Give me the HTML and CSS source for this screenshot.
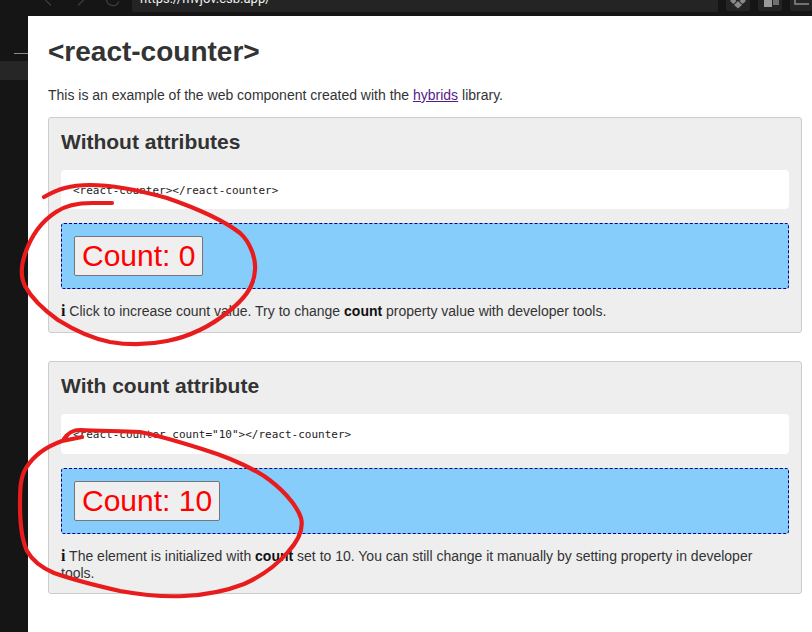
FILE: index.html
```html
<!DOCTYPE html>
<html lang="en">
<head>
<meta charset="utf-8">
<title>react-counter</title>
<link rel="stylesheet" href="styles.css">
</head>
<body>
<div class="app">
  <header class="topbar">
    <div class="nav">
      <svg class="navicons" width="132" height="16" viewBox="0 0 132 16" fill="none" stroke="#3c3c3c" stroke-width="1.300"><path d="M52 -6 45.500 0 51 5.500"/><path d="M78 5.500 83.500 0 78 -6"/><path d="M106.500 -1a6.500 6.500 0 0 0 12.500 2.500"/></svg>
    </div>
    <div class="url"><span class="urltext">https://mvjov.csb.app/</span></div>
    <div class="tools">
      <div class="tool"><svg width="24" height="11" viewBox="0 0 24 11"><path d="M12 1 16 5 12 8.500 8 5ZM7 -2 10.500 1 7.500 4 4 1ZM17 -2 20 1 16.500 4 13.500 1Z" fill="#8a8a8a"/></svg></div>
      <div class="tool"><svg width="24" height="11" viewBox="0 0 24 11"><path d="M6 0h8v7H6z" fill="#9a9a9a"/><path d="M15 0h6v5h-6z" fill="#707070"/></svg></div>
      <div class="tool tool-last"><svg width="22" height="11" viewBox="0 0 22 11" fill="none" stroke="#8a8a8a" stroke-width="1.500"><path d="M5 0v4h14"/></svg></div>
    </div>
  </header>
  <div class="body">
    <aside class="sidebar"><div class="marker"></div><div class="selected"></div></aside>
    <main class="page">
      <h1 class="title">&lt;react-counter&gt;</h1>
      <p class="intro">This is an example of the web component created with the <a class="link" href="#">hybrids</a> library.</p>
      <section class="card">
        <h2 class="card-title">Without attributes</h2>
        <pre class="code">&lt;react-counter&gt;&lt;/react-counter&gt;</pre>
        <div class="host"><button class="count">Count: 0</button></div>
        <p class="note"><span class="info">i</span> Click to increase count value. Try to change <b>count</b> property value with developer tools.</p>
      </section>
      <section class="card">
        <h2 class="card-title">With count attribute</h2>
        <pre class="code">&lt;react-counter count="10"&gt;&lt;/react-counter&gt;</pre>
        <div class="host"><button class="count">Count: 10</button></div>
        <p class="note"><span class="info">i</span> The element is initialized with <b>count</b> set to 10. You can still change it manually by setting property in developer tools.</p>
      </section>
    </main>
  </div>
  <svg class="ink" width="812" height="632" viewBox="0 0 812 632" fill="none" stroke="#e81c1c" stroke-width="4.200" stroke-linecap="round" stroke-linejoin="round">
    <path d="M44 197C58 189 70 185 90 185C112 185 138 190 167 198C190 206 222 219 240 233C250 242 256 258 255 270C254 288 243 300 228 312C212 325 192 336 167 341C148 345 128 345 110 342C90 338 74 330 58 320C44 310 32 299 25 286C20 276 21 266 25 254C31 236 42 221 56 212C66 205 78 203 92 203L112 203"/>
    <path d="M64 439C68 433 72 430 80 430C100 431 120 431 140 432C160 436 180 442 202 449C225 456 248 466 264 476C280 487 296 503 301 518C304 530 298 541 288 552C276 566 262 576 244 584C226 591 206 595 184 596C164 597 142 595 120 591C98 586 74 580 54 573C40 567 32 560 27 551C21 538 20 520 20 505C20 490 20 478 26 468C34 455 48 446 62 441L82 437"/>
  </svg>
</div>
</body>
</html>
```
FILE: styles.css
```css
* { box-sizing: border-box; }
html, body { margin: 0; height: 100%; overflow: hidden; }
body { background: #151515; font-family: "Liberation Sans", Arial, sans-serif; }
.app { position: relative; width: 812px; height: 632px; display: flex; flex-direction: column; overflow: hidden; }

.topbar { flex: 0 0 16px; height: 16px; display: flex; background: #151515; overflow: hidden; }
.nav { width: 132px; flex: none; }
.navicons { display: block; }
.url { width: 586px; height: 12px; flex: none; background: #242424; border-radius: 0 0 2px 2px; color: #f0f0f0; font-family: Roboto, sans-serif; font-size: 13px; line-height: 14px; padding-left: 8px; overflow: hidden; }
.urltext { display: block; margin-top: -8px; }
.tools { display: flex; gap: 8px; margin-left: 8px; }
.tool { width: 24px; height: 11px; background: #242424; border-radius: 0 0 2px 2px; }
.tool svg { display: block; }
.tool-last { width: 22px; }

.body { flex: 1; display: flex; min-height: 0; }
.sidebar { position: relative; width: 28px; flex: none; background: #151515; }
.marker { position: absolute; left: 14px; top: 37px; width: 14px; height: 1px; background: #8a8a8a; }
.selected { position: absolute; left: 0; top: 45px; width: 28px; height: 19px; background: #262626; }

.page { flex: 1; background: #fff; padding: 20px 10px 0 20px; color: #333; font-size: 14px; line-height: 16px; min-width: 0; }
.title { margin: 0; font-size: 28px; line-height: 32px; font-weight: 700; color: #333; }
.intro { margin: 19px 0 13.6px; color: #333; }
.link { color: #551a8b; text-decoration: underline; }

.card { background: #eee; border: 1px solid #ccc; border-radius: 3px; padding: 12px 12px 11.8px; margin-bottom: 28px; }
.card-title { margin: 0 0 16px; font-size: 21px; line-height: 24px; font-weight: 700; color: #333; }
.code { margin: 0 0 14px; height: 39.6px; background: #fff; border-radius: 4px; padding: 0 12px; font-family: "DejaVu Sans Mono", monospace; font-size: 11px; line-height: 42px; color: #222; overflow: hidden; }
.host { height: 66px; background: #87cdfb; border: 1px dashed #00008b; border-radius: 3px; padding: 12px; }
.count { display: block; height: 40px; padding: 0 7px; font-family: "Liberation Sans", Arial, sans-serif; font-size: 30px; line-height: 38px; color: #f00; background: #efefef; border: 1px solid #767676; border-radius: 2px; }
.note { margin: 14px 0 0; font-size: 14px; line-height: 17px; color: #333; }
.note b { color: #111; }
.info { font-family: "Liberation Serif", serif; font-weight: 700; color: #111; font-size: 16px; line-height: 1; }

.ink { position: absolute; left: 0; top: 0; pointer-events: none; }
```
